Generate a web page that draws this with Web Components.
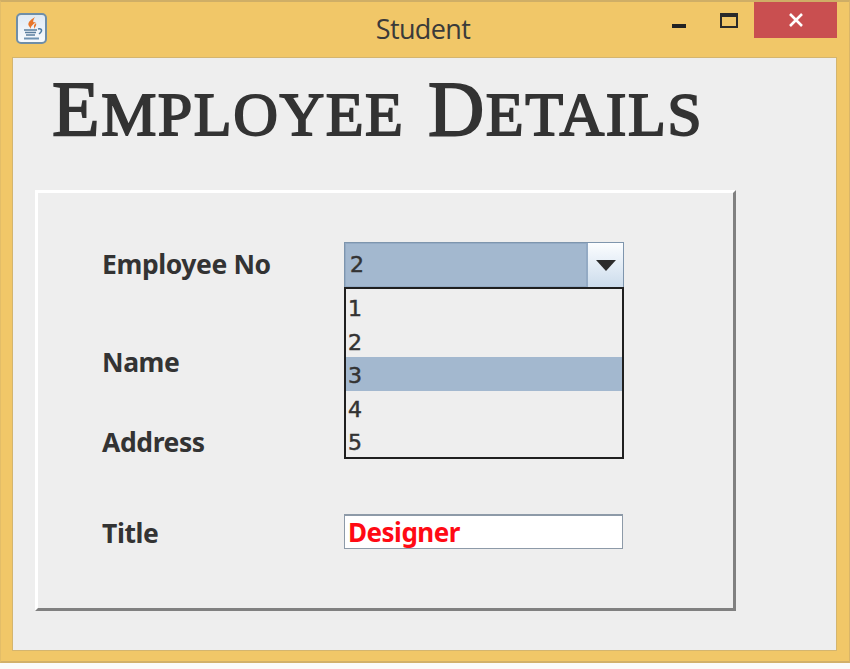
<!DOCTYPE html>
<html>
<head>
<meta charset="utf-8">
<title>Student</title>
<style>
  html, body { margin: 0; background: #fbfbfb; }
  body { width: 850px; height: 669px; overflow: hidden; }
</style>
</head>
<body>
<app-window caption="Student">
  <page-heading>
    <span class="cap">E</span>mployee <span class="cap">D</span>etails
  </page-heading>
  <etched-panel>
    <form-row label="Employee No" gap="0" lift="1">
      <combo-box value="2" options="1,2,3,4,5" highlighted="3"></combo-box>
    </form-row>
    <form-row label="Name" gap="57"></form-row>
    <form-row label="Address" gap="46"></form-row>
    <form-row label="Title" gap="55" lift="-1">
      <text-field value="Designer"></text-field>
    </form-row>
  </etched-panel>
</app-window>

<script>
// Window frame with title bar and its controls
class AppWindow extends HTMLElement {
  constructor() {
    super();
    this.attachShadow({ mode: 'open' });
    this.shadowRoot.innerHTML = `
      <style>
        :host {
          display: flex;
          flex-direction: column;
          box-sizing: border-box;
          width: 850px;
          height: 663px;
          background: #f1c768;
          border-top: 2px solid #cfae66;
          border-bottom: 2px solid #d2b06a;
          border-left: 1px solid #e3bd68;
          border-right: 1px solid #d9b568;
        }
        .bar {
          display: grid;
          grid-template-columns: 1fr auto 1fr;
          align-items: start;
          height: 54px;
          flex: none;
        }
        .icon { display: block; margin: 11px 0 0 15px; }
        .caption {
          font: 27px/54px "Open Sans", sans-serif;
          letter-spacing: -0.6px;
          color: #3a3a3a;
          padding-right: 4px;
        }
        .controls { display: flex; justify-content: flex-end; align-items: flex-start; margin-right: 12px; }
        .min { display: block; margin: 22px 34px 0 0; }
        .max { display: block; margin: 11px 16px 0 0; }
        .close {
          width: 83px; height: 36px;
          background: #c94f50;
          display: flex; align-items: center; justify-content: center;
        }
        .body {
          flex: none;
          box-sizing: border-box;
          width: 825px;
          height: 594px;
          margin: 1px 0 0 11px;
          background: #eeeeee;
          border: 1px solid #d4b56f;
        }
      </style>
      <div class="bar">
        <svg class="icon" width="32" height="32" viewBox="0 0 32 32">
          <defs>
            <linearGradient id="ig" x1="0" y1="0" x2="0" y2="1">
              <stop offset="0" stop-color="#dfe9f4"/>
              <stop offset="1" stop-color="#f8fbfe"/>
            </linearGradient>
          </defs>
          <rect x="1" y="1" width="29" height="29" rx="4" fill="url(#ig)" stroke="#6f8ea8" stroke-width="2"/>
          <path d="M19 4c-5 3-8 6-6 9l2 3c-1-3 3-5 5-7-3 1-4 0-1-5z" fill="#e8752a"/>
          <path d="M20 10c-2 2-3 3-1 6-1-2 2-3 1-6z" fill="#e8752a"/>
          <path d="M8 17h13M9 19.500h11M10 22h9" stroke="#5b7f9f" stroke-width="1.500" fill="none"/>
          <path d="M22 16c4-1 5 2 1 5" stroke="#4f7ca3" stroke-width="1.500" fill="none"/>
          <path d="M8 25.500h15" stroke="#6f93b3" stroke-width="2"/>
        </svg>
        <div class="caption"></div>
        <div class="controls">
          <svg class="min" width="14" height="4"><rect width="14" height="4" fill="#222"/></svg>
          <svg class="max" width="18" height="15">
            <rect x="1" y="1" width="16" height="13" fill="none" stroke="#2a2a2a" stroke-width="2"/>
            <rect x="1" y="1" width="16" height="3" fill="#2a2a2a"/>
          </svg>
          <div class="close">
            <svg width="16" height="16" viewBox="0 0 16 16">
              <path d="M2 2l12 12M14 2L2 14" stroke="#fff" stroke-width="2.600"/>
            </svg>
          </div>
        </div>
      </div>
      <div class="body"><slot></slot></div>
    `;
    this.shadowRoot.querySelector('.caption').textContent = this.getAttribute('caption');
  }
}

// Big small-caps heading
class PageHeading extends HTMLElement {
  constructor() {
    super();
    this.attachShadow({ mode: 'open' });
    this.shadowRoot.innerHTML = `
      <style>
        :host {
          display: block;
          height: 132px;
          box-sizing: border-box;
          padding-left: 39px;
          font: 88px/96px "Liberation Serif", serif;
          font-variant: small-caps;
          -webkit-text-stroke: 1.800px #333;
          letter-spacing: 1.500px;
          color: #333;
          white-space: nowrap;
        }
        ::slotted(.cap) { font-size: 78px; }
      </style>
      <slot></slot>
    `;
  }
}

// Panel with an etched raised border
class EtchedPanel extends HTMLElement {
  constructor() {
    super();
    this.attachShadow({ mode: 'open' });
    this.shadowRoot.innerHTML = `
      <style>
        :host {
          display: block;
          box-sizing: border-box;
          width: 701px;
          height: 421px;
          margin-left: 22px;
          padding: 49px 0 0 64px;
          border: 3px solid;
          border-color: #ffffff #808080 #808080 #ffffff;
        }
      </style>
      <slot></slot>
    `;
  }
}

// Label on the left, optional field on the right
class FormRow extends HTMLElement {
  constructor() {
    super();
    this.attachShadow({ mode: 'open' });
    this.shadowRoot.innerHTML = `
      <style>
        :host {
          display: grid;
          grid-template-columns: 242px 280px;
          align-items: center;
          min-height: 34px;
        }
        .label {
          font: bold 26.500px/34px "Noto Sans", sans-serif;
          letter-spacing: -0.4px;
          color: #333;
        }
      </style>
      <div class="label"></div>
      <slot></slot>
    `;
    const label = this.shadowRoot.querySelector('.label');
    const lift = Number(this.getAttribute('lift') || 0);
    label.textContent = this.getAttribute('label');
    // keep the box at 34px, move the text up by lift
    label.style.lineHeight = (34 - lift * 2) + 'px';
    label.style.marginBottom = (lift * 2) + 'px';
    this.style.marginTop = (this.getAttribute('gap') || 0) + 'px';
  }
}

// Open combo box with its popup list
class ComboBox extends HTMLElement {
  constructor() {
    super();
    this.attachShadow({ mode: 'open' });
    const options = this.getAttribute('options').split(',');
    const highlighted = this.getAttribute('highlighted');
    const items = options.map(o =>
      `<div class="item${o === highlighted ? ' on' : ''}">${o}</div>`).join('');
    this.shadowRoot.innerHTML = `
      <style>
        :host {
          display: block;
          position: relative;
          box-sizing: border-box;
          width: 280px;
          height: 46px;
          border: 1px solid #7e95ad;
          font: 22px/33.500px "DejaVu Sans", sans-serif;
          -webkit-text-stroke: 0.5px #333;
          color: #333;
        }
        .face { display: flex; height: 100%; background: #a3b8cf; }
        .value {
          flex: 1;
          padding: 4px 0 0 4px;
          line-height: 34px;
          border: 1px solid #93aac4;
          border-right-width: 2px;
        }
        .arrow {
          flex: none;
          width: 35px;
          display: flex; align-items: center; justify-content: center;
          background: linear-gradient(#fbfdff, #ccdcec);
        }
        .popup {
          position: absolute;
          top: 44px;
          left: -1px;
          box-sizing: border-box;
          width: 280px;
          height: 172px;
          padding-top: 1px;
          background: #eeeeee;
          border: 2px solid #1f1f1f;
        }
        .item { height: 33.500px; padding-left: 2px; line-height: 37.500px; }
        .on { background: #a3b8cf; }
      </style>
      <div class="face">
        <div class="value"></div>
        <div class="arrow">
          <svg width="20" height="11"><path d="M0 0h20L10 11z" fill="#2b2b2b"/></svg>
        </div>
      </div>
      <div class="popup">${items}</div>
    `;
    this.shadowRoot.querySelector('.value').textContent = this.getAttribute('value');
  }
}

// Single line text field
class TextField extends HTMLElement {
  constructor() {
    super();
    this.attachShadow({ mode: 'open' });
    this.shadowRoot.innerHTML = `
      <style>
        :host {
          display: block;
          box-sizing: border-box;
          width: 279px;
          height: 35px;
          padding-left: 3px;
          background: #fff;
          border: 1px solid #8d9aa8;
          border-top-width: 2px;
          font: bold 26px/32px "Noto Sans", sans-serif;
          letter-spacing: -0.5px;
          color: #ff0a14;
        }
      </style>
      <span></span>
    `;
    this.shadowRoot.querySelector('span').textContent = this.getAttribute('value');
  }
}

customElements.define('app-window', AppWindow);
customElements.define('page-heading', PageHeading);
customElements.define('etched-panel', EtchedPanel);
customElements.define('form-row', FormRow);
customElements.define('combo-box', ComboBox);
customElements.define('text-field', TextField);
</script>
</body>
</html>
